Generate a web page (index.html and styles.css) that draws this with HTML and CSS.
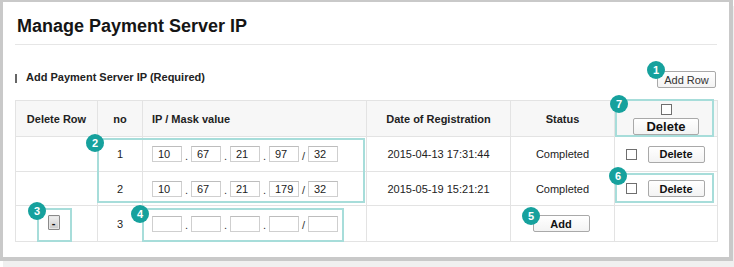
FILE: index.html
```html
<!DOCTYPE html>
<html>
<head>
<meta charset="utf-8">
<link rel="stylesheet" href="styles.css">
</head>
<body>
<div class="page">
  <div class="panel">
    <h1 class="title">Manage Payment Server IP</h1>
    <div class="section-bar">
      <h2 class="section-title">Add Payment Server IP (Required)</h2>
      <button class="btn btn-addrow">Add Row</button>
    </div>
    <table class="ip-table">
      <colgroup>
        <col class="c-del"><col class="c-no"><col class="c-ip"><col class="c-date"><col class="c-status"><col class="c-act">
      </colgroup>
      <thead>
        <tr class="r-head">
          <th>Delete Row</th>
          <th>no</th>
          <th class="left">IP / Mask value</th>
          <th>Date of Registration</th>
          <th>Status</th>
          <th>
            <div class="head-act">
              <input type="checkbox" class="chk">
              <button class="btn btn-del-lg">Delete</button>
            </div>
          </th>
        </tr>
      </thead>
      <tbody>
        <tr class="r1">
          <td></td>
          <td>1</td>
          <td class="left">
            <div class="ip"><input class="oct" value="10"><span class="sep">.</span><input class="oct" value="67"><span class="sep">.</span><input class="oct" value="21"><span class="sep">.</span><input class="oct" value="97"><span class="sep">/</span><input class="oct" value="32"></div>
          </td>
          <td>2015-04-13 17:31:44</td>
          <td>Completed</td>
          <td><div class="row-act"><input type="checkbox" class="chk"><button class="btn btn-del">Delete</button></div></td>
        </tr>
        <tr class="r2">
          <td></td>
          <td>2</td>
          <td class="left">
            <div class="ip"><input class="oct" value="10"><span class="sep">.</span><input class="oct" value="67"><span class="sep">.</span><input class="oct" value="21"><span class="sep">.</span><input class="oct" value="179"><span class="sep">/</span><input class="oct" value="32"></div>
          </td>
          <td>2015-05-19 15:21:21</td>
          <td>Completed</td>
          <td><div class="row-act"><input type="checkbox" class="chk"><button class="btn btn-del">Delete</button></div></td>
        </tr>
        <tr class="r3">
          <td class="minus-cell"><button class="btn-minus">-</button></td>
          <td>3</td>
          <td class="left">
            <div class="ip"><input class="oct" value=""><span class="sep">.</span><input class="oct" value=""><span class="sep">.</span><input class="oct" value=""><span class="sep">.</span><input class="oct" value=""><span class="sep">/</span><input class="oct" value=""></div>
          </td>
          <td></td>
          <td><button class="btn btn-add">Add</button></td>
          <td></td>
        </tr>
      </tbody>
    </table>
  </div>

  <div class="hl hl-2"></div>
  <div class="hl hl-3"></div>
  <div class="hl hl-4"></div>
  <div class="hl hl-6"></div>
  <div class="hl hl-7"></div>

  <span class="badge b1">1</span>
  <span class="badge b2">2</span>
  <span class="badge b3">3</span>
  <span class="badge b4">4</span>
  <span class="badge b5">5</span>
  <span class="badge b6">6</span>
  <span class="badge b7">7</span>
</div>
</body>
</html>
```
FILE: styles.css
```css
* { box-sizing: border-box; }
html, body {
  margin: 0;
  padding: 0;
  background: #ffffff;
  font-family: "Liberation Sans", Arial, sans-serif;
  color: #222;
}
.page {
  position: relative;
  width: 734px;
  height: 267px;
  overflow: hidden;
}
.panel {
  width: 733px;
  height: 261px;
  border-style: solid;
  border-color: #c9c9c9;
  border-width: 2px 4px 4px 3px;
  padding: 13px 12px 0 12px;
  background: #fff;
  box-shadow: 3px 6px 0 #f0f0f0;
}
.title {
  margin: 0;
  font-size: 18px;
  line-height: 22px;
  font-weight: bold;
  color: #151515;
  padding: 0 0 7px 2px;
  border-bottom: 1px solid #e6e6e6;
}
.section-bar {
  margin-top: 26px;
  display: flex;
  justify-content: space-between;
  align-items: flex-start;
  padding-right: 1px;
}
.section-title {
  margin: 0;
  font-size: 11px;
  line-height: 13px;
  font-weight: bold;
  color: #222;
  display: flex;
  align-items: center;
}
.section-title::before {
  content: "";
  display: inline-block;
  width: 2px;
  height: 9px;
  background: #666;
  margin: 1px 9px 0 0;
}
.btn {
  font-family: "Liberation Sans", Arial, sans-serif;
  background: linear-gradient(#ffffff, #f3f3f3);
  border: 1px solid #a9a9a9;
  border-radius: 2px;
  padding: 0;
  color: #222;
  cursor: pointer;
}
.btn-addrow {
  width: 59px;
  height: 17px;
  font-size: 11px;
  color: #333;
}
.ip-table {
  margin-top: 12px;
  width: 702px;
  table-layout: fixed;
  border-collapse: collapse;
  font-size: 11px;
}
.c-del { width: 82px; }
.c-no { width: 45px; }
.c-ip { width: 224px; }
.c-date { width: 144px; }
.c-status { width: 104px; }
.c-act { width: 103px; }
.ip-table th, .ip-table td {
  border: 1px solid #e3e3e3;
  text-align: center;
  vertical-align: middle;
  padding: 0;
  color: #222;
}
.ip-table th {
  background: #f7f7f7;
  font-weight: bold;
}
.ip-table .left { text-align: left; padding-left: 9px; }
.r-head { height: 36px; }
.r1 { height: 35px; }
.r2 { height: 34px; }
.r3 { height: 36px; }
.head-act {
  display: flex;
  flex-direction: column;
  align-items: center;
  gap: 3px;
  padding-top: 1px;
}
.chk {
  -webkit-appearance: none;
  appearance: none;
  width: 11px;
  height: 11px;
  margin: 0;
  border: 1px solid #6f6f6f;
  background: #fff;
  border-radius: 0;
}
.btn-del-lg {
  width: 66px;
  height: 17px;
  font-size: 13px;
  font-weight: bold;
  color: #111;
  line-height: 15px;
}
.row-act {
  display: flex;
  align-items: center;
  justify-content: center;
  gap: 11px;
  padding-right: 2px;
}
.btn-del {
  width: 57px;
  height: 17px;
  font-size: 11px;
  font-weight: bold;
  color: #111;
}
.btn-add {
  width: 57px;
  height: 17px;
  font-size: 11px;
  font-weight: bold;
  color: #111;
  margin-right: 3px;
}
.ip {
  display: flex;
  align-items: center;
}
.oct {
  width: 30px;
  height: 16px;
  border: 1px solid #cfcfcf;
  border-top-color: #bdbdbd;
  padding: 0 0 0 5px;
  font-family: "Liberation Sans", Arial, sans-serif;
  font-size: 11px;
  color: #222;
  background: #fff;
  margin: 0;
}
.sep {
  width: 9px;
  text-align: center;
  font-size: 11px;
  padding-top: 3px;
  color: #333;
}
.minus-cell { padding-right: 6px !important; }
.btn-minus {
  width: 12px;
  height: 15px;
  padding: 0;
  border: 1px solid #8a8a8a;
  border-radius: 1px;
  background: linear-gradient(#f2f2f2, #c9c9c9);
  box-shadow: inset 0 0 0 1px #e6e6e6;
  font-family: "Liberation Sans", Arial, sans-serif;
  font-size: 11px;
  font-weight: bold;
  line-height: 12px;
  color: #111;
  margin-top: -5px;
}
.hl {
  position: absolute;
  border: 2px solid #a7ddda;
}
.hl-2 { left: 97px; top: 138px; width: 268px; height: 65px; }
.hl-3 { left: 37px; top: 208px; width: 35px; height: 34px; }
.hl-4 { left: 142px; top: 208px; width: 202px; height: 34px; }
.hl-6 { left: 615px; top: 173px; width: 99px; height: 30px; }
.hl-7 { left: 615px; top: 99px; width: 99px; height: 38px; }
.badge {
  position: absolute;
  width: 18px;
  height: 18px;
  border-radius: 50%;
  background: #16a19d;
  color: #fff;
  font-size: 11px;
  font-weight: bold;
  line-height: 18px;
  text-align: center;
  margin: -9px 0 0 -9px;
}
.b1 { left: 656px; top: 70px; }
.b2 { left: 95px; top: 143px; }
.b3 { left: 37px; top: 211px; }
.b4 { left: 140px; top: 214px; }
.b5 { left: 531px; top: 216px; }
.b6 { left: 618px; top: 176px; }
.b7 { left: 619px; top: 104px; }
```
